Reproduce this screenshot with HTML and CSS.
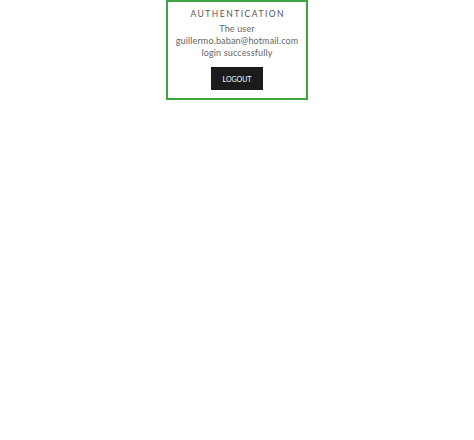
FILE: index.html
```html
<!DOCTYPE html>
<html>
<head>
<meta charset="utf-8">
<link rel="stylesheet" href="styles.css">
</head>
<body>
<div class="card">
  <h1 class="title">AUTHENTICATION</h1>
  <p class="msg">The user<br>guillermo.baban@hotmail.com<br>login successfully</p>
  <button class="logout">LOGOUT</button>
</div>
</body>
</html>
```
FILE: styles.css
```css
html, body {
  margin: 0;
  padding: 0;
  background: #fff;
}
body {
  font-family: "Lato", "Open Sans", sans-serif;
}
.card {
  width: 138px;
  margin: 0 auto;
  border: 2px solid #3fa33f;
  padding: 5px 0 8px;
  display: flex;
  flex-direction: column;
  align-items: center;
  text-align: center;
}
.title {
  margin: 0;
  font-family: "Lato", sans-serif;
  font-size: 8.5px;
  font-weight: 400;
  letter-spacing: 1.5px;
  line-height: 14px;
  color: #555;
  padding-left: 1.5px;
}
.msg {
  margin: 2px 0 0;
  font-family: "Lato", sans-serif;
  font-size: 9px;
  line-height: 12px;
  letter-spacing: 0.15px;
  color: #666;
}
.logout {
  margin-top: 8px;
  width: 52px;
  height: 23px;
  border: none;
  background: #1b1b1b;
  color: #fff;
  font-family: "Lato", sans-serif;
  font-size: 7px;
  padding: 0;
}
```
